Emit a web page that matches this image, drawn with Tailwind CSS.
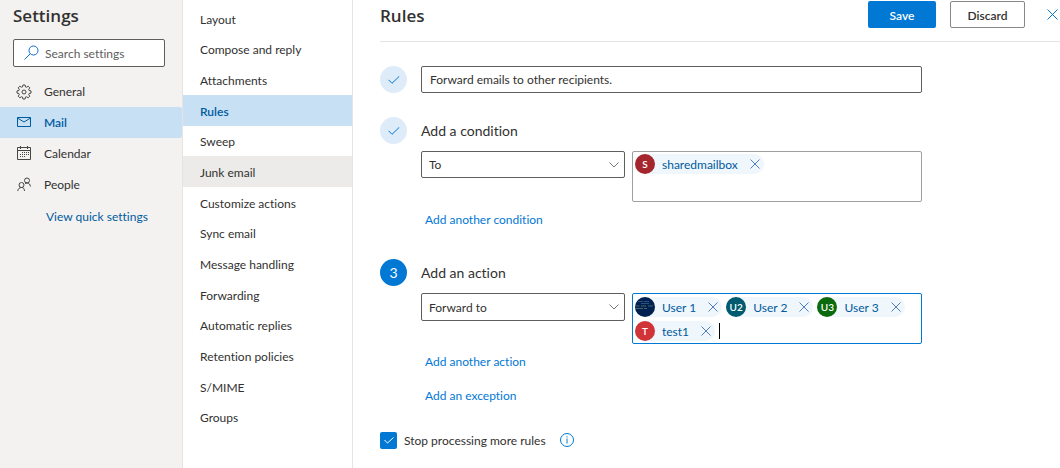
<!DOCTYPE html>
<html lang="en">

<head>
  <meta charset="UTF-8">
  <meta name="viewport" content="width=device-width, initial-scale=1.0">
  <title>Settings - Mail - Rules</title>
  <script src="https://cdn.jsdelivr.net/npm/@tailwindcss/browser@4"></script>
</head>

<body class="flex h-screen overflow-hidden bg-white font-['Lato','Open_Sans',sans-serif] text-[12px] leading-4 text-[#323130] [font-variant-ligatures:none]">
  <!-- Settings categories -->
  <aside class="w-[183px] shrink-0 border-r border-[#e5e4e3] bg-[#f3f2f1]">
    <h1 class="px-[13px] pt-1 font-['Open_Sans',sans-serif] text-[17px] leading-6 font-semibold">Settings</h1>
    <label class="mx-[13px] mt-[11px] mr-[17px] flex h-7 items-center gap-[5px] rounded-[2px] border border-[#605e5c] bg-white pl-2.5">
      <svg class="size-4 shrink-0 text-[#0f6cd0]" viewBox="0 0 16 16" fill="none" stroke="currentColor">
        <circle cx="9.500" cy="5.500" r="4.500" />
        <path d="M6.300 8.700L.5 14.500" />
      </svg>
      <input type="text" aria-label="Search settings" placeholder="Search settings" class="w-full min-w-0 pt-0.5 outline-none placeholder:text-[#605e5c]">
    </label>
    <nav class="mt-[9px]">
      <a href="#" class="flex h-[31px] items-center gap-3 pl-4">
        <svg class="size-4" viewBox="0 0 16 16" fill="none" stroke="#484644" stroke-linejoin="round">
          <path d="M6.900 1h2.200l.4 1.900 1 .4 1.700-1.100 1.600 1.600-1.100 1.700.4 1 1.900.4v2.200l-1.900.4-.4 1 1.100 1.700-1.600 1.600-1.700-1.100-1 .4L9.100 15H6.900l-.4-1.900-1-.4-1.700 1.100-1.600-1.600 1.100-1.700-.4-1L1 9.100V6.900l1.900-.4.4-1-1.100-1.700 1.600-1.600 1.700 1.100 1-.4z" />
          <circle cx="8" cy="8" r="2" />
        </svg>
        General
      </a>
      <a href="#" class="flex h-[31px] items-center gap-3 rounded-r-[2px] bg-[#c7e0f4] pl-4 font-semibold text-[#005a9e]">
        <svg class="size-4" viewBox="0 0 16 16" fill="none" stroke="currentColor">
          <path d="M1.500 2.500h13v9h-13zM1.500 3l6.500 4 6.500-4" />
        </svg>
        Mail
      </a>
      <a href="#" class="flex h-[31px] items-center gap-3 pl-4">
        <svg class="size-4" viewBox="0 0 16 16" fill="none" stroke="#484644">
          <path d="M1.500 1.500h13v12h-13zM1.500 4.500h13M4.500 0v3M11.500 0v3" />
          <path d="M6 6.500h7M4 8.500h9M4 10.500h6" stroke-dasharray="1 1" />
        </svg>
        Calendar
      </a>
      <a href="#" class="flex h-[31px] items-center gap-3 pl-4">
        <svg class="size-4" viewBox="0 0 16 16" fill="none" stroke="#484644">
          <circle cx="5.500" cy="8" r="2.500" />
          <path d="M1.800 14c.2-2.200 1.500-3.500 3.700-3.500S8.300 11.800 8.500 14" />
          <circle cx="11" cy="3.500" r="2.500" />
          <path d="M9 6.700c.6-.5 1.200-.7 2-.7 2 0 3.200 1.300 3.400 3.500" />
        </svg>
        People
      </a>
    </nav>
    <a href="#" class="mt-[9px] ml-[46px] block text-[#005a9e]">View quick settings</a>
  </aside>

  <!-- Mail sections -->
  <nav class="w-[170px] shrink-0 border-r border-[#e5e4e3] pt-[3px]">
    <ul class="grid h-[429px] auto-rows-fr">
      <li class="flex items-center pt-[3px] pl-[17px]"><a href="#">Layout</a></li>
      <li class="flex items-center pt-[3px] pl-[17px]"><a href="#">Compose and reply</a></li>
      <li class="flex items-center pt-[3px] pl-[17px]"><a href="#">Attachments</a></li>
      <li class="flex items-center bg-[#c7e0f4] pt-[3px] pl-[17px] font-semibold text-[#005a9e]"><a href="#">Rules</a></li>
      <li class="flex items-center pt-[3px] pl-[17px]"><a href="#">Sweep</a></li>
      <li class="flex items-center bg-[#edebe9] pt-[3px] pl-[17px]"><a href="#">Junk email</a></li>
      <li class="flex items-center pt-[3px] pl-[17px]"><a href="#">Customize actions</a></li>
      <li class="flex items-center pt-[3px] pl-[17px]"><a href="#">Sync email</a></li>
      <li class="flex items-center pt-[3px] pl-[17px]"><a href="#">Message handling</a></li>
      <li class="flex items-center pt-[3px] pl-[17px]"><a href="#">Forwarding</a></li>
      <li class="flex items-center pt-[3px] pl-[17px]"><a href="#">Automatic replies</a></li>
      <li class="flex items-center pt-[3px] pl-[17px]"><a href="#">Retention policies</a></li>
      <li class="flex items-center pt-[3px] pl-[17px]"><a href="#">S/MIME</a></li>
      <li class="flex items-center pt-[3px] pl-[17px]"><a href="#">Groups</a></li>
    </ul>
  </nav>

  <!-- Rule editor -->
  <main class="min-w-0 flex-1 pl-[27px]">
    <header class="flex h-[42px] items-start border-b border-[#e5e4e3] pt-px">
      <h2 class="mt-[3px] flex-1 font-['Open_Sans',sans-serif] text-[17px] leading-6 font-semibold">Rules</h2>
      <button class="h-[27px] w-[68px] rounded-[2px] bg-[#0078d4] pt-0.5 font-semibold text-white">Save</button>
      <button class="ml-3.5 h-[27px] w-[75px] rounded-[2px] border border-[#8a8886] pt-0.5 font-semibold">Discard</button>
      <button aria-label="Close" class="mt-2 mr-0.5 ml-[22px]">
        <svg class="size-[11px]" viewBox="0 0 11 11" fill="none" stroke="#0078d4"><path d="M.5.5l10 10M10.500.5l-10 10" /></svg>
      </button>
    </header>

    <form class="max-w-[542px] pt-6">
      <div class="flex gap-3.5">
        <span class="flex size-[27px] shrink-0 items-center justify-center rounded-full bg-[#deecf9]">
          <svg class="h-2 w-3" viewBox="0 0 12 8" fill="none" stroke="#0078d4"><path d="M.5 3.800L4 7.300 11.300.3" /></svg>
        </span>
        <input type="text" aria-label="Rule name" value="Forward emails to other recipients." class="h-[27px] min-w-0 flex-1 rounded-[2px] border border-[#605e5c] px-2 outline-none">
      </div>

      <!-- Condition -->
      <div class="mt-6 flex gap-3.5">
        <span class="flex size-[27px] shrink-0 items-center justify-center rounded-full bg-[#deecf9]">
          <svg class="h-2 w-3" viewBox="0 0 12 8" fill="none" stroke="#0078d4"><path d="M.5 3.800L4 7.300 11.300.3" /></svg>
        </span>
        <div class="min-w-0 flex-1">
          <h3 class="pt-1 text-[14px] leading-5">Add a condition</h3>
          <div class="mt-2.5 flex items-start gap-[7px]">
            <div class="grid w-[204px] shrink-0 items-center">
              <select aria-label="Condition" class="col-start-1 row-start-1 h-[27px] w-full appearance-none rounded-[2px] border border-[#605e5c] pr-6 pl-[7px]">
                <option>To</option>
              </select>
              <svg class="pointer-events-none col-start-1 row-start-1 mr-1.5 h-1.5 w-2.5 justify-self-end" viewBox="0 0 10 6" fill="none" stroke="#7a7876"><path d="M.5.5L5 5 9.500.5" /></svg>
            </div>
            <div class="flex min-h-[51px] min-w-0 flex-1 flex-wrap content-start gap-1 rounded-[2px] border border-[#a19f9d] px-0.5 pt-0.5">
              <div class="flex h-5 items-center rounded-full bg-[#eff6fc] pr-1 text-[#005a9e]">
                <span class="flex size-5 items-center justify-center rounded-full bg-[#a4262c] text-[10px] font-semibold text-white">S</span>
                <span class="ml-[7px] pt-0.5">sharedmailbox</span>
                <button type="button" aria-label="Remove sharedmailbox" class="ml-3"><svg class="size-[10px]" viewBox="0 0 10 10" fill="none" stroke="#4f7fc0"><path d="M.5.5l9 9M9.500.5l-9 9" /></svg></button>
              </div>
            </div>
          </div>
          <a href="#" class="mt-2.5 ml-1 block w-fit text-[#0078d4]">Add another condition</a>
        </div>
      </div>

      <!-- Action -->
      <div class="mt-[31px] flex gap-3.5">
        <span class="flex size-[27px] shrink-0 items-center justify-center rounded-full bg-[#0078d4] text-[14px] text-white">3</span>
        <div class="min-w-0 flex-1">
          <h3 class="pt-1 text-[14px] leading-5">Add an action</h3>
          <div class="mt-2.5 flex items-start gap-[7px]">
            <div class="grid w-[204px] shrink-0 items-center">
              <select aria-label="Action" class="col-start-1 row-start-1 h-7 w-full appearance-none rounded-[2px] border border-[#605e5c] pt-0.5 pr-6 pl-[7px]">
                <option>Forward to</option>
              </select>
              <svg class="pointer-events-none col-start-1 row-start-1 mr-1.5 h-1.5 w-2.5 justify-self-end" viewBox="0 0 10 6" fill="none" stroke="#7a7876"><path d="M.5.5L5 5 9.500.5" /></svg>
            </div>
            <div class="flex min-h-[51px] min-w-0 flex-1 flex-wrap content-start gap-1 rounded-[2px] border border-[#0078d4] px-0.5 pt-[3px]">
              <div class="flex h-5 items-center rounded-full bg-[#eff6fc] pr-1 text-[#005a9e]">
                <svg class="size-5" viewBox="0 0 20 20">
                  <circle cx="10" cy="10" r="10" fill="#002050" />
                  <path d="M3 4.500h5M9 4.500h5M6 6.500h8" stroke="#3d6690" stroke-width=".7" />
                  <path d="M.5 9h4M6 9h5M13 9h5M1 11.500h7M9 11.500h3" stroke="#5a7770" stroke-width=".8" />
                </svg>
                <span class="ml-[7px] pt-0.5">User 1</span>
                <button type="button" aria-label="Remove User 1" class="ml-3"><svg class="size-[10px]" viewBox="0 0 10 10" fill="none" stroke="#4f7fc0"><path d="M.5.5l9 9M9.500.5l-9 9" /></svg></button>
              </div>
              <div class="flex h-5 items-center rounded-full bg-[#eff6fc] pr-1 text-[#005a9e]">
                <span class="flex size-5 items-center justify-center rounded-full bg-[#005b70] text-[10px] font-semibold text-white">U2</span>
                <span class="ml-[7px] pt-0.5">User 2</span>
                <button type="button" aria-label="Remove User 2" class="ml-3"><svg class="size-[10px]" viewBox="0 0 10 10" fill="none" stroke="#4f7fc0"><path d="M.5.5l9 9M9.500.5l-9 9" /></svg></button>
              </div>
              <div class="flex h-5 items-center rounded-full bg-[#eff6fc] pr-1 text-[#005a9e]">
                <span class="flex size-5 items-center justify-center rounded-full bg-[#0b6a0b] text-[10px] font-semibold text-white">U3</span>
                <span class="ml-[7px] pt-0.5">User 3</span>
                <button type="button" aria-label="Remove User 3" class="ml-3"><svg class="size-[10px]" viewBox="0 0 10 10" fill="none" stroke="#4f7fc0"><path d="M.5.5l9 9M9.500.5l-9 9" /></svg></button>
              </div>
              <div class="flex h-5 items-center rounded-full bg-[#eff6fc] pr-1 text-[#005a9e]">
                <span class="flex size-5 items-center justify-center rounded-full bg-[#d13438] text-[10px] font-semibold text-white">T</span>
                <span class="ml-[7px] pt-0.5">test1</span>
                <button type="button" aria-label="Remove test1" class="ml-3"><svg class="size-[10px]" viewBox="0 0 10 10" fill="none" stroke="#4f7fc0"><path d="M.5.5l9 9M9.500.5l-9 9" /></svg></button>
              </div>
              <input type="text" aria-label="Add people" class="mt-0.5 h-4 w-20 border-l border-black outline-none">
            </div>
          </div>
          <a href="#" class="mt-2.5 ml-1 block w-fit text-[#0078d4]">Add another action</a>
          <a href="#" class="mt-[18px] ml-1 block w-fit text-[#0078d4]">Add an exception</a>
        </div>
      </div>

      <div class="mt-[27px] flex items-center">
        <label class="flex items-center gap-[7px]">
          <span class="grid items-center justify-items-center">
            <input type="checkbox" checked class="col-start-1 row-start-1 size-[17px] appearance-none rounded-[2px] bg-[#0078d4]">
            <svg class="pointer-events-none col-start-1 row-start-1 h-[7px] w-2.5" viewBox="0 0 10 7" fill="none" stroke="white"><path d="M.5 3L3.500 6 9.500.5" /></svg>
          </span>
          <span class="pt-0.5">Stop processing more rules</span>
        </label>
        <button type="button" aria-label="More information" class="ml-3.5">
          <svg class="size-[14px]" viewBox="0 0 14 14" fill="none" stroke="#0078d4"><circle cx="7" cy="7" r="6.500" /><path d="M7 5.500V10.500M7 3.300v1.200" /></svg>
        </button>
      </div>
    </form>
  </main>
</body>

</html>
